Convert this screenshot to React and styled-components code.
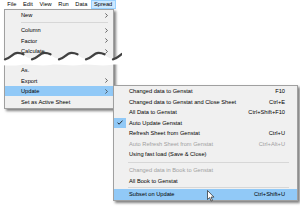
import React from "react";
import styled, { createGlobalStyle } from "styled-components";

const Global = createGlobalStyle`
  html, body { margin: 0; padding: 0; background: #fff; }
  body { font-family: "Liberation Sans", Arial, sans-serif; }
`;

const Page = styled.div`
  position: relative;
  width: 300px;
  height: 206px;
  overflow: hidden;
  background: #fff;
  font-family: "Liberation Sans", Arial, sans-serif;
  font-size: 5.7px;
  color: #000;
`;

const MenuBar = styled.div`
  display: flex;
  height: 9px;
  padding-left: 4px;
  background: #fff;
`;

const BarItem = styled.div`
  padding: 0 3.3px;
  line-height: 9px;
  background: ${(p) => (p.$active ? "#cce8ff" : "transparent")};
  box-shadow: ${(p) => (p.$active ? "inset 0 0 0 1px #99d1ff" : "none")};
`;

const Menu = styled.div`
  box-sizing: border-box;
  width: ${(p) => p.$width}px;
  margin-left: ${(p) => p.$left || 0}px;
  background: #f0f0f0;
  border: 1px solid #a0a0a0;
  box-shadow: 2px 2px 2.5px rgba(0, 0, 0, 0.5);
  padding-bottom: ${(p) => p.$padBottom || 0}px;
  display: flex;
  flex-direction: column;
`;

const SubMenu = styled(Menu)`
  position: absolute;
  left: 113px;
  top: 85px;
  z-index: 2;
`;

const Item = styled.div`
  display: flex;
  align-items: center;
  height: 10.5px;
  padding-right: ${(p) => p.$padRight}px;
  background: ${(p) => (p.$active ? "#91c9f7" : "transparent")};
  color: ${(p) => (p.$disabled ? "#a0a0a0" : "#000")};
  white-space: nowrap;
`;

const Gutter = styled.div`
  width: ${(p) => p.$width}px;
  height: 100%;
  flex: none;
  display: flex;
  align-items: center;
`;

const CheckBox = styled.div`
  width: 12px;
  height: 10px;
  background: #91c9f7;
  display: flex;
  align-items: center;
  justify-content: center;
`;

const Label = styled.span`
  flex: 1;
`;

const Shortcut = styled.span`
  margin-left: 8px;
`;

const Separator = styled.div`
  height: ${(p) => p.$h}px;
  display: flex;
  align-items: center;
  padding-left: ${(p) => p.$inset}px;
  padding-right: ${(p) => p.$insetRight}px;
  &::after {
    content: "";
    flex: 1;
    height: 1px;
    background: #d7d7d7;
  }
`;

const TearGap = styled.div`
  height: 8.25px;
`;

const Overlay = styled.svg`
  position: absolute;
  left: 0;
  top: 44px;
  z-index: 1;
  pointer-events: none;
`;

const Cursor = styled.svg`
  position: absolute;
  left: 207px;
  top: 190px;
  z-index: 3;
`;

const Chevron = () => (
  <svg width="3" height="5" viewBox="0 0 3 5">
    <path d="M0.4 0.4 L2.4 2.5 L0.4 4.6" fill="none" stroke="#444" strokeWidth="0.8" />
  </svg>
);

const Check = () => (
  <svg width="6" height="5" viewBox="0 0 6 5">
    <path d="M0.5 2.6 L2.1 4.2 L5.5 0.6" fill="none" stroke="#1a1a1a" strokeWidth="0.9" />
  </svg>
);

function MainItem({ label, arrow, active }) {
  return (
    <Item $padRight={5} $active={active}>
      <Gutter $width={16} />
      <Label>{label}</Label>
      {arrow && <Chevron />}
    </Item>
  );
}

function SubItem({ label, shortcut, checked, disabled, active }) {
  return (
    <Item $padRight={12} $active={active} $disabled={disabled}>
      <Gutter $width={15}>{checked && <CheckBox><Check /></CheckBox>}</Gutter>
      <Label>{label}</Label>
      {shortcut && <Shortcut>{shortcut}</Shortcut>}
    </Item>
  );
}

function Tear() {
  const troughs = [-23, 4, 31, 58, 85, 112];
  const lo = 58.5;
  const hi = 52.3;
  let top = `M-10 ${lo}`;
  troughs.forEach((x) => {
    top += ` C${x + 5} ${lo} ${x + 8.5} ${hi} ${x + 13.5} ${hi} C${x + 18.5} ${hi} ${x + 22} ${lo} ${x + 27} ${lo}`;
  });
  const fill = `${top} L140 65 C130 66 120 63.5 110 65 C100 66.5 90 63.5 80 65 C70 66.5 60 63.5 50 65 C40 66.5 30 63.5 20 65 C10 66.5 0 64 -10 65 Z`;
  const strokes = troughs.map(
    (x) => `M${x + 1} ${lo + 0.8} C${x + 6} ${lo + 0.3} ${x + 8.5} ${hi + 0.6} ${x + 13.5} ${hi + 0.6} C${x + 16} ${hi + 0.6} ${x + 17.5} ${hi + 1} ${x + 19.5} ${hi + 2}`
  );
  return (
    <Overlay width="122" height="26" viewBox="0 44 122 26">
      <defs>
        <filter id="blur" x="-10%" y="-50%" width="120%" height="200%">
          <feGaussianBlur stdDeviation="0.6" />
        </filter>
      </defs>
      <path d={fill} fill="#fff" />
      <g filter="url(#blur)">
        {strokes.map((d, i) => (
          <path key={i} d={d} fill="none" stroke="rgba(30,30,30,0.85)" strokeWidth="2.3" strokeLinecap="round" />
        ))}
      </g>
    </Overlay>
  );
}

export default function App() {
  return (
    <>
      <Global />
      <Page>
        <MenuBar>
          <BarItem>File</BarItem>
          <BarItem>Edit</BarItem>
          <BarItem>View</BarItem>
          <BarItem>Run</BarItem>
          <BarItem>Data</BarItem>
          <BarItem $active>Spread</BarItem>
        </MenuBar>
        <Menu $width={110} $left={4} $padBottom={1.5}>
          <MainItem label="New" arrow />
          <Separator $h={4.5} $inset={16} $insetRight={5} />
          <MainItem label="Column" arrow />
          <MainItem label="Factor" arrow />
          <MainItem label="Calculate" arrow />
          <TearGap />
          <MainItem label="As." />
          <MainItem label="Export" arrow />
          <MainItem label="Update" arrow active />
          <MainItem label="Set as Active Sheet" />
        </Menu>
        <Tear />
        <SubMenu $width={185}>
          <SubItem label="Changed data to Genstat" shortcut="F10" />
          <SubItem label="Changed data to Genstat and Close Sheet" shortcut="Ctrl+E" />
          <SubItem label="All Data to Genstat" shortcut="Ctrl+Shift+F10" />
          <SubItem label="Auto Update Genstat" checked />
          <SubItem label="Refresh Sheet from Genstat" shortcut="Ctrl+U" />
          <SubItem label="Auto Refresh Sheet from Genstat" shortcut="Ctrl+Alt+U" disabled />
          <SubItem label="Using fast load (Save & Close)" />
          <Separator $h={5.5} $inset={14} $insetRight={8} />
          <SubItem label="Changed data in Book to Genstat" disabled />
          <SubItem label="All Book to Genstat" />
          <Separator $h={3} $inset={14} $insetRight={8} />
          <SubItem label="Subset on Update" shortcut="Ctrl+Shift+U" active />
        </SubMenu>
        <Cursor width="8" height="12" viewBox="0 0 8 12">
          <path d="M0.5 0.5 L0.5 9.5 L2.6 7.6 L4.1 11 L5.5 10.4 L4 7.1 L6.9 7.1 Z" fill="#fff" stroke="#222" strokeWidth="0.7" strokeLinejoin="round" />
        </Cursor>
      </Page>
    </>
  );
}
